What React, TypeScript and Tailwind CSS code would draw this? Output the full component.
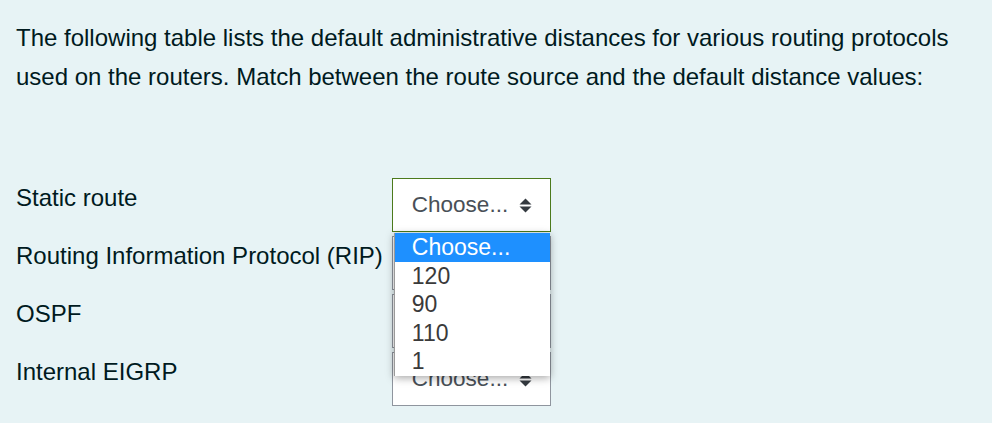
import { useState } from "react"

const rows = ["Static route", "Routing Information Protocol (RIP)", "OSPF", "Internal EIGRP"]
const options = ["Choose...", "120", "90", "110", "1"]

function Arrows() {
  return (
    <svg width="13" height="15" viewBox="0 0 13 15" className="shrink-0">
      <path d="M6.5 0.5 L12.5 6.5 L0.5 6.5 Z" fill="#343a40" />
      <path d="M0.5 8.5 L12.5 8.5 L6.5 14.5 Z" fill="#343a40" />
    </svg>
  )
}

function FakeSelect({ open, focused }: { open?: boolean; focused?: boolean }) {
  return (
    <div className="relative">
      <div
        className={
          "flex h-[54px] w-[159px] items-center justify-between bg-white pl-[19px] pr-[18px] text-[22.5px] text-[#495057] border " +
          (focused ? "border-[#4c7a1c]" : "border-[#8f959e]")
        }
      >
        <span>Choose...</span>
        <Arrows />
      </div>
      {open && (
        <ul className="absolute left-[2px] top-[55px] z-10 w-[156px] bg-white shadow-[0_2px_8px_rgba(0,0,0,0.35)] border-l border-[#9a9a9a]">
          {options.map((o, i) => (
            <li
              key={o}
              className={
                "h-[28.6px] pl-[17px] text-[23px] leading-[28px] " +
                (i === 0 ? "bg-[#1e90ff] text-white" : "text-[#3a3a3a]")
              }
            >
              {o}
            </li>
          ))}
        </ul>
      )}
    </div>
  )
}

export default function App() {
  const [openIdx] = useState(0)

  return (
    <div className="h-[423px] w-full overflow-hidden bg-[#e7f3f5] px-4 pt-[18px] font-['Liberation_Sans',Arial,sans-serif] text-[#001a1e]">
      {/* question text */}
      <p className="text-[24px] leading-[39px]">
        The following table lists the default administrative distances for various routing protocols used on the
        routers. Match between the route source and the default distance values:
      </p>

      {/* match rows */}
      <div className="mt-[82px] grid grid-cols-[auto_auto] justify-start gap-x-[9px] gap-y-[4px]">
        {rows.map((r, i) => (
          <div key={r} className="contents">
            <div className="text-[24px] leading-[39px]">{r}</div>
            <FakeSelect open={i === openIdx} focused={i === openIdx} />
          </div>
        ))}
      </div>
    </div>
  )
}
